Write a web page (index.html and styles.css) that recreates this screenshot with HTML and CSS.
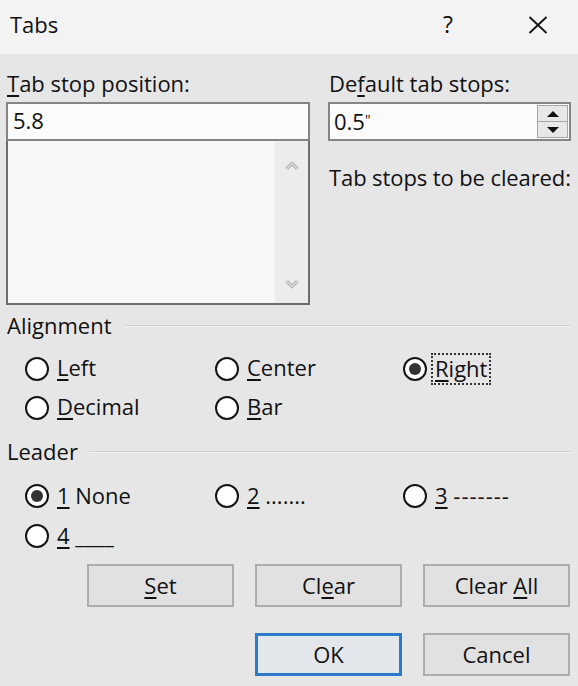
FILE: index.html
```html
<!DOCTYPE html>
<html lang="en">
<head>
<meta charset="utf-8">
<title>Tabs</title>
<link rel="stylesheet" href="styles.css">
</head>
<body>
<div class="dialog">
  <header class="titlebar">
    <span class="title">Tabs</span>
    <span class="help">?</span>
    <svg class="close" width="20" height="18" viewBox="0 0 20 18"><path d="M1.5 1 L18.5 17 M18.5 1 L1.5 17" stroke="#111" stroke-width="1.8" fill="none"/></svg>
  </header>
  <main class="content">
    <section class="top">
      <div class="col">
        <div class="label"><u>T</u>ab stop position:</div>
        <div class="textbox">5.8</div>
        <div class="listbox">
          <div class="list-area"></div>
          <div class="scrollbar">
            <svg class="chev" width="16" height="12" viewBox="0 0 16 12"><path d="M1.5 9.5 L8 3 L14.5 9.5 M3.5 10.5 L8 6 L12.5 10.5" stroke="#b4b4b4" stroke-width="1.2" fill="none"/></svg>
            <svg class="chev" width="16" height="12" viewBox="0 0 16 12"><path d="M1.5 2.5 L8 9 L14.5 2.5 M3.5 1.5 L8 6 L12.5 1.5" stroke="#b4b4b4" stroke-width="1.2" fill="none"/></svg>
          </div>
        </div>
      </div>
      <div class="col">
        <div class="label">De<u>f</u>ault tab stops:</div>
        <div class="spinbox">
          <span class="spin-value">0.5<span class="inch">"</span></span>
          <div class="spin-btns">
            <span class="spin-btn"><span class="tri-up"></span></span>
            <span class="spin-btn"><span class="tri-down"></span></span>
          </div>
        </div>
        <div class="label cleared">Tab stops to be cleared:</div>
      </div>
    </section>

    <section class="group align-group">
      <div class="group-head"><span>Alignment</span><span class="rule"></span></div>
      <div class="radios align-radios">
        <label class="radio"><span class="circle"></span><span class="rtext"><u>L</u>eft</span></label>
        <label class="radio"><span class="circle"></span><span class="rtext"><u>C</u>enter</span></label>
        <label class="radio"><span class="circle checked"></span><span class="rtext focus"><u>R</u>ight</span></label>
        <label class="radio"><span class="circle"></span><span class="rtext"><u>D</u>ecimal</span></label>
        <label class="radio"><span class="circle"></span><span class="rtext"><u>B</u>ar</span></label>
      </div>
    </section>

    <section class="group leader-group">
      <div class="group-head"><span>Leader</span><span class="rule"></span></div>
      <div class="radios leader-radios">
        <label class="radio"><span class="circle checked"></span><span class="rtext"><u>1</u> None</span></label>
        <label class="radio"><span class="circle"></span><span class="rtext"><u>2</u> .......</span></label>
        <label class="radio"><span class="circle"></span><span class="rtext"><u>3</u> <span class="dashes">-------</span></span></label>
        <label class="radio"><span class="circle"></span><span class="rtext"><u>4</u> ____</span></label>
      </div>
    </section>

    <div class="btn-row set-row">
      <button class="btn"><u>S</u>et</button>
      <button class="btn">Cl<u>e</u>ar</button>
      <button class="btn">Clear <u>A</u>ll</button>
    </div>
    <div class="btn-row ok-row">
      <button class="btn default">OK</button>
      <button class="btn">Cancel</button>
    </div>
  </main>
</div>
</body>
</html>
```

FILE: styles.css
```css
* { box-sizing: border-box; }

html, body {
  margin: 0;
  padding: 0;
}

body {
  width: 578px;
  height: 686px;
  overflow: hidden;
  background: #e6e6e6;
  font-family: "Open Sans", "Noto Sans", sans-serif;
  font-size: 22px;
  color: #111;
}

u {
  text-decoration-thickness: 2px;
  text-underline-offset: 3px;
}

.dialog {
  width: 578px;
  height: 686px;
  display: flex;
  flex-direction: column;
}

.titlebar {
  height: 54px;
  background: #f3f3f3;
  display: flex;
  align-items: center;
  padding: 0 30px 6px 10px;
}

.title {
  font-size: 22px;
}

.help {
  margin-left: auto;
  width: 20px;
  text-align: center;
  font-size: 23px;
}

.close {
  margin-left: 70px;
  display: block;
  margin-top: 2px;
}

.content {
  flex: 1;
  background: #e6e6e6;
  padding: 0 7px 0 6px;
}

.top {
  display: grid;
  grid-template-columns: 304px 243px;
  column-gap: 18px;
}

.col {
  display: flex;
  flex-direction: column;
}

.label {
  height: 30px;
  line-height: 30px;
  margin-top: 14px;
  margin-bottom: 4px;
  padding-left: 1px;
  white-space: nowrap;
}

.label.cleared {
  margin-top: 21px;
  letter-spacing: -0.1px;
}

.textbox {
  height: 39px;
  border: 2px solid #858585;
  background: #fbfbfb;
  line-height: 33px;
  padding-left: 5px;
}

.listbox {
  height: 164px;
  border: 2px solid #6e6e6e;
  border-top: 0;
  background: #f7f7f7;
  display: flex;
}

.list-area {
  flex: 1;
}

.scrollbar {
  width: 33px;
  background: #ececec;
  display: flex;
  flex-direction: column;
  align-items: center;
  justify-content: space-between;
  padding: 18px 0 12px;
}

.chev {
  display: block;
}

.spinbox {
  height: 39px;
  border: 2px solid #858585;
  background: #fbfbfb;
  display: flex;
  align-items: center;
  padding-left: 4px;
}

.spin-value {
  flex: 1;
  line-height: 33px;
  padding-bottom: 2px;
}

.inch {
  font-size: 14px;
  vertical-align: 5px;
}

.spin-btns {
  width: 31px;
  height: 33px;
  margin-right: 1px;
  display: flex;
  flex-direction: column;
}

.spin-btn {
  flex: 1;
  border: 1.5px solid #a6a6a6;
  background: #e8e8e8;
  display: flex;
  align-items: center;
  justify-content: center;
}

.spin-btn + .spin-btn {
  border-top: 0;
}

.tri-up {
  width: 0;
  height: 0;
  border-left: 6px solid transparent;
  border-right: 6px solid transparent;
  border-bottom: 6px solid #111;
}

.tri-down {
  width: 0;
  height: 0;
  border-left: 6px solid transparent;
  border-right: 6px solid transparent;
  border-top: 6px solid #111;
}

.group-head {
  height: 30px;
  line-height: 28px;
  display: flex;
  align-items: center;
  padding-left: 1px;
}

.group-head span:first-child {
  padding-bottom: 2px;
}

.align-group .group-head {
  margin-top: 6px;
}

.leader-group .group-head {
  margin-top: 10px;
}

.rule {
  flex: 1;
  margin-left: 12px;
  border-top: 1px solid #cfcfcf;
  border-bottom: 1px solid #f2f2f2;
}

.radios {
  display: grid;
  grid-template-columns: 190px 188px 1fr;
  padding-left: 19px;
}

.align-radios {
  margin-top: 8px;
  grid-auto-rows: 39px;
}

.leader-radios {
  margin-top: 9px;
  grid-auto-rows: 40px;
}

.radio {
  display: flex;
  align-items: center;
  gap: 8px;
  white-space: nowrap;
}

.rtext {
  line-height: 26px;
  padding-bottom: 3px;
}

.circle {
  width: 24px;
  height: 24px;
  border: 2px solid #141414;
  border-radius: 50%;
  background: #fff;
  display: flex;
  align-items: center;
  justify-content: center;
  flex-shrink: 0;
}

.circle.checked::after {
  content: "";
  width: 12px;
  height: 12px;
  border-radius: 50%;
  background: #333;
}

.focus {
  border: 2px dotted #333;
  padding: 0 2px 2px;
  margin-left: -4px;
}

.dashes {
  letter-spacing: 1px;
}

.btn-row {
  display: flex;
  justify-content: flex-end;
  gap: 21px;
  padding-right: 1px;
}

.set-row {
  margin-top: 8px;
}

.ok-row {
  margin-top: 26px;
}

.btn {
  width: 147px;
  height: 43px;
  border: 2px solid #adadad;
  background: #e1e1e1;
  font-family: "Open Sans", "Noto Sans", sans-serif;
  font-size: 22px;
  color: #111;
  padding: 0 0 2px;
}

.btn.default {
  border: 3px solid #2a7bc9;
  background: #e3e6ea;
}
```
